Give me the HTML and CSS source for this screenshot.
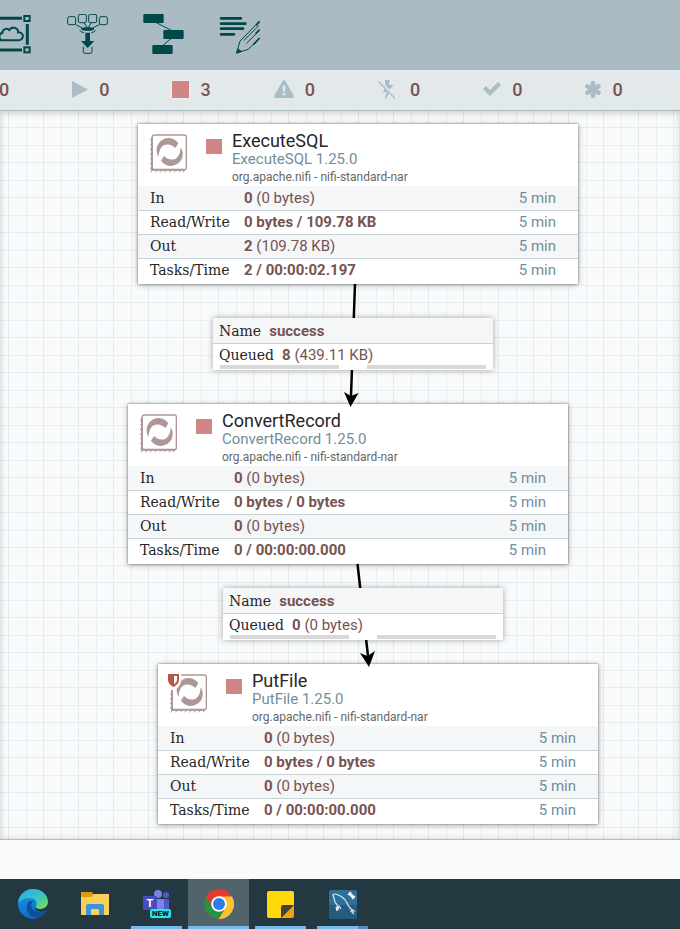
FILE: index.html
```html
<!DOCTYPE html>
<html lang="en">
<head>
  <meta charset="UTF-8">
  <meta name="viewport" content="width=device-width, initial-scale=1.0">
  <title>NiFi Flow</title>
  <link rel="stylesheet" href="styles.css">
</head>
<body>
  <svg class="defs" width="0" height="0" aria-hidden="true">
    <symbol id="processor" viewBox="60 50 117 117">
      <rect x="67" y="53" width="102" height="104" rx="6" fill="#fff" stroke="#ad9897" stroke-width="4"/>
      <path d="M66 60V157H164" fill="none" stroke="#ad9897" stroke-width="6"/>
      <path d="M61 70l5-8M61 84l5-8M61 98l5-8M61 112l5-8M61 126l5-8M61 140l5-8M61 154l5-8M62 165l8-8M76 165l8-8M90 165l8-8M104 165l8-8M118 165l8-8M132 165l8-8M146 165l8-8M158 165l8-8" stroke="#ad9897" stroke-width="3"/>
      <path d="M86 118A35 35 0 0 1 145 78L136 92Q120 76 101 84Q87 92 86 118Z" fill="#ad9897"/>
      <path d="M152 90A35 35 0 0 1 93 130L102 116Q118 132 137 124Q151 116 152 90Z" fill="#ad9897"/>
    </symbol>
  </svg>

  <header class="toolbar">
    <button class="tool" aria-label="Remote process group">
      <svg viewBox="-27 42 123 123" fill="none" stroke="#004849">
        <path d="M-8 55H66M-8 150H66M82 72V134" stroke-width="9"/>
        <rect x="73" y="48" width="16" height="15" stroke-width="6"/>
        <rect x="73" y="142" width="16" height="15" stroke-width="6"/>
        <path d="M6 121C-4 120-6 101 7 99C7 88 21 82 28 90C36 77 56 84 54 97C67 95 73 109 65 117Q62 121 56 121Z" stroke-width="6"/>
      </svg>
    </button>
    <button class="tool" aria-label="Funnel">
      <svg viewBox="201 42 123 123" fill="none" stroke="#004849" stroke-width="3">
        <rect x="203" y="50" width="24" height="24" rx="5"/>
        <rect x="235" y="43" width="24" height="25" rx="5"/>
        <rect x="266" y="43" width="24" height="25" rx="5"/>
        <rect x="298" y="50" width="24" height="24" rx="5"/>
        <path d="M227 74L247 84M252 68L261 82M274 68L265 82M298 74L278 84"/>
        <ellipse cx="263" cy="87" rx="19" ry="4" fill="#004849"/>
        <path d="M239 91Q244 97 252 98M287 91Q282 97 274 98"/>
        <path d="M256 98H270V123H283L263 144L243 123H256Z" fill="#004849" stroke="none"/>
        <path d="M250 140V155Q250 160 255 160H271Q276 160 276 155V140"/>
      </svg>
    </button>
    <button class="tool" aria-label="Template">
      <svg viewBox="429 42 123 123" fill="#004849">
        <path d="M465 66L520 94M520 110L486 138" stroke="#004849" stroke-width="3"/>
        <rect x="430" y="42" width="61" height="27" rx="3"/>
        <rect x="490" y="90" width="61" height="27" rx="3"/>
        <rect x="457" y="135" width="61" height="27" rx="3"/>
      </svg>
    </button>
    <button class="tool" aria-label="Label">
      <svg viewBox="657 42 123 123" fill="none" stroke="#004849">
        <path d="M663 55H723M663 71H736M663 86H729M663 103H702" stroke-width="8" stroke-linecap="round"/>
        <path d="M779 63L720 123L710 159L745 148L779 114M731 122L777 76M740 130L779 90" stroke-width="3"/>
        <path d="M713 146L710 160L725 154Z" fill="#004849" stroke-width="2"/>
        <path d="M779 64L768 76M779 89L767 101M779 114L760 134" stroke-width="5"/>
      </svg>
    </button>
  </header>

  <div class="status-bar">
    <div class="status first">0</div>
    <div class="status">
      <svg width="16" height="17" viewBox="0 0 16 17"><path d="M0 0L16 8.500L0 17Z"/></svg>0
    </div>
    <div class="status">
      <i class="stopped"></i>3
    </div>
    <div class="status">
      <svg width="20" height="18" viewBox="0 0 20 18"><path fill-rule="evenodd" d="M8.700 1Q10 -1 11.300 1L19.700 15.500Q20.300 18 18 18H2Q-.3 18 .3 15.500ZM8.500 5.500L9 11.700H11L11.500 5.500ZM8.700 13V15.300H11.300V13Z"/></svg>0
    </div>
    <div class="status">
      <svg class="bolt" width="18" height="19" viewBox="0 0 18 19"><path d="M7 0H12L10.500 4.500L15.500 5L11.500 9.500L7 5ZM6.500 8.500L11 13L8 19H7L8.500 12L5 12.500Z"/><path d="M.5 1.500L17 18.500" stroke="#aabdc6" stroke-width="1.300"/></svg>0
    </div>
    <div class="status">
      <svg width="18" height="14" viewBox="0 0 18 14"><path d="M0 7L3 4L7 8L15 0L18 3L7 14Z"/></svg>0
    </div>
    <div class="status">
      <svg width="16" height="17" viewBox="0 0 16 17"><path d="M8 2V15M2.400 5.300L13.600 11.700M13.600 5.300L2.400 11.700" stroke="#aabdc6" stroke-width="4.500" stroke-linecap="round"/></svg>0
    </div>
  </div>

  <main class="canvas">
    <section class="processor execute-sql">
      <div class="processor-head">
        <svg class="processor-icon"><use href="#processor"/></svg>
        <i class="run-state"></i>
        <div>
          <h2>ExecuteSQL</h2>
          <p class="type">ExecuteSQL 1.25.0</p>
          <p class="bundle">org.apache.nifi - nifi-standard-nar</p>
        </div>
      </div>
      <table>
        <tr><th>In</th><td><b>0</b> (0 bytes)</td><td class="window">5 min</td></tr>
        <tr><th>Read/Write</th><td><b>0 bytes / 109.78 KB</b></td><td class="window">5 min</td></tr>
        <tr><th>Out</th><td><b>2</b> (109.78 KB)</td><td class="window">5 min</td></tr>
        <tr><th>Tasks/Time</th><td><b>2 / 00:00:02.197</b></td><td class="window">5 min</td></tr>
      </table>
    </section>

    <section class="processor convert-record">
      <div class="processor-head">
        <svg class="processor-icon"><use href="#processor"/></svg>
        <i class="run-state"></i>
        <div>
          <h2>ConvertRecord</h2>
          <p class="type">ConvertRecord 1.25.0</p>
          <p class="bundle">org.apache.nifi - nifi-standard-nar</p>
        </div>
      </div>
      <table>
        <tr><th>In</th><td><b>0</b> (0 bytes)</td><td class="window">5 min</td></tr>
        <tr><th>Read/Write</th><td><b>0 bytes / 0 bytes</b></td><td class="window">5 min</td></tr>
        <tr><th>Out</th><td><b>0</b> (0 bytes)</td><td class="window">5 min</td></tr>
        <tr><th>Tasks/Time</th><td><b>0 / 00:00:00.000</b></td><td class="window">5 min</td></tr>
      </table>
    </section>

    <section class="processor put-file">
      <div class="processor-head">
        <svg class="processor-icon"><use href="#processor"/></svg>
        <svg class="shield" viewBox="0 0 14 17"><path d="M0 0H14V9Q13 14 7 17H0Z" fill="#fff"/><path d="M1 1H12V7Q12 11 6.500 14Q1 11 1 7Z" fill="#ba554a"/><path d="M7 3H10V7Q10 9.500 7 11.500Z" fill="#fff"/></svg>
        <i class="run-state"></i>
        <div>
          <h2>PutFile</h2>
          <p class="type">PutFile 1.25.0</p>
          <p class="bundle">org.apache.nifi - nifi-standard-nar</p>
        </div>
      </div>
      <table>
        <tr><th>In</th><td><b>0</b> (0 bytes)</td><td class="window">5 min</td></tr>
        <tr><th>Read/Write</th><td><b>0 bytes / 0 bytes</b></td><td class="window">5 min</td></tr>
        <tr><th>Out</th><td><b>0</b> (0 bytes)</td><td class="window">5 min</td></tr>
        <tr><th>Tasks/Time</th><td><b>0 / 00:00:00.000</b></td><td class="window">5 min</td></tr>
      </table>
    </section>

    <svg class="links" width="680" height="728" viewBox="0 111 680 728">
      <path d="M355 284L351 396M357.500 564L368 656" stroke="#000" stroke-width="2.500"/>
      <path d="M350.500 407L344 392L351 396L358.500 393Z"/>
      <path d="M369 667L360 653L367.500 656L375 651Z"/>
    </svg>

    <section class="connection first-link">
      <p class="name"><span>Name</span><b>success</b></p>
      <p class="queued"><span>Queued</span><span class="count"><b>8</b> (439.11 KB)</span></p>
      <div class="bars"><i></i><i></i></div>
    </section>

    <section class="connection second-link">
      <p class="name"><span>Name</span><b>success</b></p>
      <p class="queued"><span>Queued</span><span class="count"><b>0</b> (0 bytes)</span></p>
      <div class="bars"><i></i><i></i></div>
    </section>
  </main>

  <div class="breadcrumbs"></div>

  <footer class="taskbar">
    <button class="app" aria-label="Edge">
      <svg width="30" height="30" viewBox="0 0 30 30">
        <defs>
          <linearGradient id="edgeTop" x1="0" y1="0" x2="1" y2="1"><stop offset="0" stop-color="#2aa9e8"/><stop offset=".5" stop-color="#36c3c8"/><stop offset="1" stop-color="#76e04a"/></linearGradient>
          <linearGradient id="edgeLow" x1="0" y1="0" x2="0" y2="1"><stop offset="0" stop-color="#1a9be4"/><stop offset="1" stop-color="#0b6bcb"/></linearGradient>
        </defs>
        <circle cx="15" cy="15" r="15" fill="url(#edgeLow)"/>
        <path d="M0 14C1 5 8 0 15 0C24 0 30 6 30 13C30 18 26 20 22 20C18 20 17 18 18 17C20 13 17 9 12 9C6 9 1 12 0 14Z" fill="url(#edgeTop)"/>
        <path d="M12 12C7 15 7 25 17 29C22 29 26 26 28 22C24 24 17 24 14 19C12 16 14 13 16 12Z" fill="#104f92"/>
        <path d="M17 17C16 20 19 23 24 23Q27 23 30 20V14C29 19 25 20 22 20C18 20 17 18 17 17Z" fill="#233840"/>
      </svg>
    </button>
    <button class="app" aria-label="File Explorer">
      <svg width="28" height="26" viewBox="0 0 28 26">
        <path d="M0 1H11L13 4V9H0Z" fill="#e19a06"/>
        <path d="M0 6H10L13 3H28V24H0Z" fill="#fbd05a"/>
        <path d="M5 24V15Q5 13 7 13H21Q23 13 23 15V24H18V18H10V24Z" fill="#3b94dc"/>
      </svg>
    </button>
    <button class="app running" aria-label="Teams">
      <svg width="28" height="28" viewBox="0 0 28 28">
        <circle cx="15" cy="4" r="4" fill="#7b83eb"/><circle cx="23" cy="5" r="3" fill="#5059c9"/>
        <rect x="19" y="9" width="7" height="12" rx="1" fill="#5059c9"/><rect x="10" y="9" width="11" height="13" fill="#7b83eb"/>
        <rect y="6" width="14" height="14" rx="1" fill="#464ebd"/>
        <text x="7" y="17" class="teams-t" text-anchor="middle">T</text>
        <rect x="7" y="19" width="21" height="9" rx="2" fill="#2de5df"/>
        <text x="17.500" y="26" class="teams-new" text-anchor="middle">NEW</text>
      </svg>
    </button>
    <button class="app running active" aria-label="Chrome">
      <svg width="30" height="30" viewBox="0 0 30 30">
        <circle cx="15" cy="15" r="15" fill="#e33b2e"/>
        <path d="M15 7.500H28A15 15 0 0 1 14.500 30L21.500 18.800Z" fill="#fcc031"/>
        <path d="M2 7.500L8.500 18.800Q13 24 20 21.500L14.500 30A15 15 0 0 1 2 7.500Z" fill="#269347"/>
        <circle cx="15" cy="15" r="7.800" fill="#fff"/><circle cx="15" cy="15" r="6" fill="#2f7bea"/>
      </svg>
    </button>
    <button class="app running" aria-label="Sticky Notes">
      <svg width="27" height="27" viewBox="0 0 27 27">
        <path d="M2 0H25Q27 0 27 2V14L14 27H2Q0 27 0 25V2Q0 0 2 0Z" fill="#ffd80a"/>
        <path d="M27 14V25Q27 27 25 27H14Z" fill="#f0a30a"/>
        <path d="M14 27V16Q14 14 16 14H27Z" fill="#474039"/>
      </svg>
    </button>
    <button class="app running stacked" aria-label="MySQL Workbench">
      <svg width="28" height="29" viewBox="0 0 28 29">
        <rect width="28" height="29" rx="2" fill="#2f7099"/><path d="M0 15H28V27Q28 29 26 29H2Q0 29 0 27Z" fill="#265b80"/>
        <path d="M9 20L8 15L6 12L5 8L4 5Q5 3 9 5Q15 7 18 13Q20 17 22 19L25 21L22 21L25 24M9 20L7 17L8 21M9 20L10 16L12 19" fill="none" stroke="#dbe8f0" stroke-width="1.200"/>
        <path d="M20 3L25 8" stroke="#eef4f8" stroke-width="3"/><path d="M19 5L22 2M23 9L26 6" stroke="#eef4f8" stroke-width="1.500"/>
      </svg>
    </button>
  </footer>
</body>
</html>
```

FILE: styles.css
```css
* {
  margin: 0;
  padding: 0;
  box-sizing: border-box;
}

body {
  display: flex;
  flex-direction: column;
  min-height: 100vh;
  overflow-x: hidden;
  font-family: Roboto, sans-serif;
  font-size: 15px;
  color: #775351;
  background-color: #f9fafc;
}

.defs {
  position: absolute;
}

button {
  border: none;
  background: none;
  cursor: pointer;
}

/* component toolbar */
.toolbar {
  display: flex;
  align-items: flex-start;
  height: 70px;
  padding-top: 14px;
  overflow: hidden;
  background-color: #aabbc3;
}

.tool {
  flex: none;
  width: 76px;
}

.tool:first-child {
  margin-left: -27px;
}

.tool svg {
  display: block;
  width: 41px;
  height: 41px;
  margin: 0 auto;
}

/* flow status */
.status-bar {
  display: flex;
  gap: 63px;
  height: 41px;
  padding-bottom: 2px;
  overflow: hidden;
  background-color: #e3e8eb;
  border-bottom: 1px solid #aabbc3;
}

.status {
  display: flex;
  align-items: center;
  gap: 11px;
  font-size: 18px;
  font-weight: 500;
}

.status.first {
  margin-left: -1px;
}

.status svg {
  fill: #aabdc6;
}

.status .bolt {
  margin-right: 3px;
}

.stopped {
  width: 17px;
  height: 17px;
  background-color: #d18686;
  box-shadow: 0 0 3px #fff;
}

/* canvas */
.canvas {
  position: relative;
  flex: 1;
  min-height: 728px;
  overflow: hidden;
  background-color: #f9fafb;
  background-image:
    linear-gradient(#e5ebed 1px, transparent 1px),
    linear-gradient(#e9eef0 1px, transparent 1px),
    linear-gradient(90deg, #e5ebed 1px, transparent 1px),
    linear-gradient(90deg, #e9eef0 1px, transparent 1px);
  background-size: 35px 35px;
  background-position: 0 16px, 0 34px, 8px 0, 26px 0;
  box-shadow: inset 0 3px 6px rgba(0, 0, 0, 0.15), inset 0 -3px 6px rgba(0, 0, 0, 0.06);
}

.processor {
  position: absolute;
  width: 440px;
  padding-bottom: 2px;
  background-color: #fff;
  box-shadow: 0 0 2px rgba(0, 0, 0, 0.5), 0 1px 6px rgba(0, 0, 0, 0.3);
}

.execute-sql {
  left: 138px;
  top: 13px;
}

.convert-record {
  left: 128px;
  top: 293px;
}

.put-file {
  left: 158px;
  top: 553px;
}

.processor-head {
  position: relative;
  display: flex;
  height: 62px;
  padding: 8px 12px 0;
}

.processor-icon {
  width: 39px;
  height: 39px;
  margin-top: 2px;
}

.shield {
  position: absolute;
  left: 9px;
  top: 9px;
  width: 14px;
  height: 17px;
}

.run-state {
  width: 16px;
  height: 15px;
  margin: 7px 10px 0 17px;
  background-color: #d18686;
}

.processor h2 {
  font-size: 18px;
  font-weight: 400;
  line-height: 18px;
  color: #262626;
}

.type {
  line-height: 18px;
  color: #728e9b;
}

.bundle {
  font-size: 12px;
  line-height: 18px;
  color: #666;
}

.processor table {
  width: 100%;
  border-collapse: collapse;
}

.processor tr {
  height: 24px;
  border-bottom: 1px solid #c7d2d7;
}

.processor tr:nth-child(odd) {
  background-color: #f4f6f7;
}

.processor tr:last-child {
  border-bottom: none;
}

th,
.name span,
.queued span:first-child {
  font-family: "DejaVu Serif", serif;
  font-size: 14px;
  font-weight: 400;
  color: #262626;
}

.processor th {
  width: 106px;
  padding-left: 12px;
  text-align: left;
}

.processor .window {
  padding-right: 22px;
  text-align: right;
  color: #728e9b;
}

.links {
  position: absolute;
  left: 0;
  top: 0;
}

.connection {
  position: absolute;
  width: 280px;
  background-color: #fff;
  box-shadow: 0 0 6px rgba(0, 0, 0, 0.35);
}

.first-link {
  left: 213px;
  top: 207px;
}

.second-link {
  left: 223px;
  top: 477px;
}

.connection p {
  display: flex;
  align-items: center;
  gap: 8px;
  padding: 0 6px;
}

.connection .name {
  height: 26px;
  background-color: #f4f6f7;
  border-bottom: 1px solid #c7d2d7;
}

.connection .queued {
  height: 21px;
}

.bars {
  display: flex;
  justify-content: space-between;
  padding: 0 7px 1px;
}

.bars i {
  width: 119px;
  height: 4px;
  background-color: #d8d8d8;
}

.breadcrumbs {
  height: 40px;
  border-top: 1px solid #aabbc3;
}

/* desktop taskbar */
.taskbar {
  display: flex;
  gap: 1px;
  height: 50px;
  padding-left: 2px;
  background-color: #233840;
}

.app {
  position: relative;
  display: flex;
  align-items: center;
  justify-content: center;
  width: 61px;
}

.active {
  background-color: #52646b;
}

.running::after {
  content: "";
  position: absolute;
  left: 5px;
  right: 5px;
  bottom: 0;
  height: 3px;
  background-color: #76b9ed;
}

.active::after {
  left: 0;
  right: 0;
}

.stacked::after {
  background: linear-gradient(90deg, #76b9ed 80%, #5a8db5 80%);
}

.teams-t {
  font: 700 11px Roboto, sans-serif;
  fill: #fff;
}

.teams-new {
  font: 900 8px Roboto, sans-serif;
  fill: #12282c;
}
```
